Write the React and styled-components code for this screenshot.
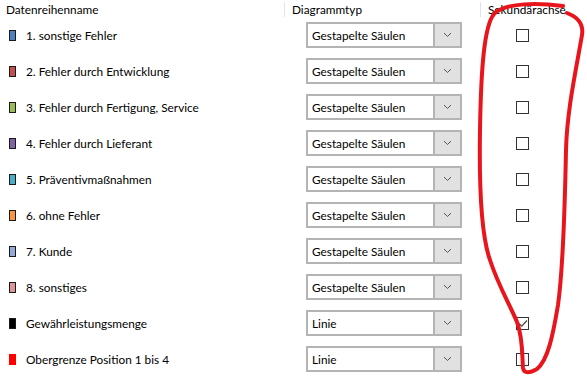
import React from "react";
import styled, { createGlobalStyle } from "styled-components";

const GlobalStyle = createGlobalStyle`
  body {
    margin: 0;
    background: #ffffff;
    font-family: Lato, "Noto Sans", "Liberation Sans", sans-serif;
    font-size: 11.8px;
    color: #000;
  }
`;

const series = [
  { name: "1. sonstige Fehler", color: "#4f81bd", type: "Gestapelte Säulen" },
  { name: "2. Fehler durch Entwicklung", color: "#c0504d", type: "Gestapelte Säulen" },
  { name: "3. Fehler durch Fertigung, Service", color: "#9bbb59", type: "Gestapelte Säulen" },
  { name: "4. Fehler durch Lieferant", color: "#8064a2", type: "Gestapelte Säulen" },
  { name: "5. Präventivmaßnahmen", color: "#4bacc6", type: "Gestapelte Säulen" },
  { name: "6. ohne Fehler", color: "#f79646", type: "Gestapelte Säulen" },
  { name: "7. Kunde", color: "#95a9d4", type: "Gestapelte Säulen" },
  { name: "8. sonstiges", color: "#d99694", type: "Gestapelte Säulen" },
  { name: "Gewährleistungsmenge", color: "#000000", type: "Linie", checked: true },
  { name: "Obergrenze Position 1 bis 4", color: "#ff0000", type: "Linie", plain: true },
];

const Page = styled.div`
  position: relative;
  width: 587px;
  height: 379px;
  overflow: hidden;
`;

const Grid = styled.div`
  display: grid;
  grid-template-columns: 284px 196px 85px;
`;

const HeaderCell = styled.div`
  height: 15px;
  display: flex;
  align-items: center;
  padding-left: ${(p) => (p.$first ? "6px" : "7px")};
  border-left: ${(p) => (p.$first ? "none" : "1px solid #e3e3e3")};
  box-sizing: border-box;
  margin: 2px 0 0;
  line-height: 15px;
  color: #000;
  ${(p) => p.$last && "border-right: 1px solid #e3e3e3;"}
`;

const Cell = styled.div`
  height: 36px;
  display: flex;
  align-items: center;
`;

const NameCell = styled(Cell)`
  padding-left: 9px;
`;

const Swatch = styled.span`
  width: 7px;
  height: 11px;
  box-sizing: border-box;
  background: ${(p) => p.$color};
  border: 1px solid ${(p) => (p.$plain ? p.$color : "#1a1a1a")};
  margin-right: 10px;
`;

const Combo = styled.div`
  margin-left: 22px;
  width: 156px;
  height: 26px;
  box-sizing: border-box;
  border: 2px solid #b4b4b4;
  display: flex;
  align-items: stretch;
  background: #fff;
`;

const ComboText = styled.span`
  flex: 1;
  display: flex;
  align-items: center;
  padding-left: 4px;
`;

const ComboButton = styled.span`
  width: 25px;
  background: #e1e1e1;
  border-left: 2px solid #b4b4b4;
  display: flex;
  align-items: center;
  justify-content: center;
`;

const CheckCell = styled(Cell)`
  padding-left: 36px;
`;

const Box = styled.span`
  width: 13px;
  height: 13px;
  box-sizing: border-box;
  border: 1.5px solid #333;
  display: flex;
  align-items: center;
  justify-content: center;
  background: #fff;
`;

const Overlay = styled.svg`
  position: absolute;
  left: 0;
  top: 0;
  pointer-events: none;
`;

const Chevron = () => (
  <svg width="9" height="6" viewBox="0 0 9 6">
    <path d="M1 1 L4.5 4.5 L8 1" fill="none" stroke="#555" strokeWidth="1" />
  </svg>
);

const Tick = () => (
  <svg width="10" height="9" viewBox="0 0 10 9">
    <path d="M1 4.5 L3.8 7.2 L9 1.5" fill="none" stroke="#444" strokeWidth="1.2" />
  </svg>
);

export default function App() {
  return (
    <Page>
      <GlobalStyle />
      <Grid>
        <HeaderCell $first>Datenreihenname</HeaderCell>
        <HeaderCell>Diagrammtyp</HeaderCell>
        <HeaderCell $last>Sekundärachse</HeaderCell>
        {series.map((s) => (
          <React.Fragment key={s.name}>
            <NameCell>
              <Swatch $color={s.color} $plain={s.plain} />
              {s.name}
            </NameCell>
            <Cell>
              <Combo>
                <ComboText>{s.type}</ComboText>
                <ComboButton>
                  <Chevron />
                </ComboButton>
              </Combo>
            </Cell>
            <CheckCell>
              <Box>{s.checked && <Tick />}</Box>
            </CheckCell>
          </React.Fragment>
        ))}
      </Grid>
      <Overlay width="587" height="379" viewBox="0 0 587 379">
        <path
          d="M563 6 C540 3 505 2 494 14 C484 26 481 70 480 130 C479 190 481 235 490 260 C498 285 510 305 517 322 C523 338 522 355 523 368 C524 374 530 373 537 369 C548 360 553 335 558 305 C563 270 565 200 566 150 C567 110 576 70 582 35 C584 22 575 16 567 13"
          fill="none"
          stroke="#e8161c"
          strokeWidth="4"
          strokeLinecap="round"
          strokeLinejoin="round"
        />
      </Overlay>
    </Page>
  );
}
